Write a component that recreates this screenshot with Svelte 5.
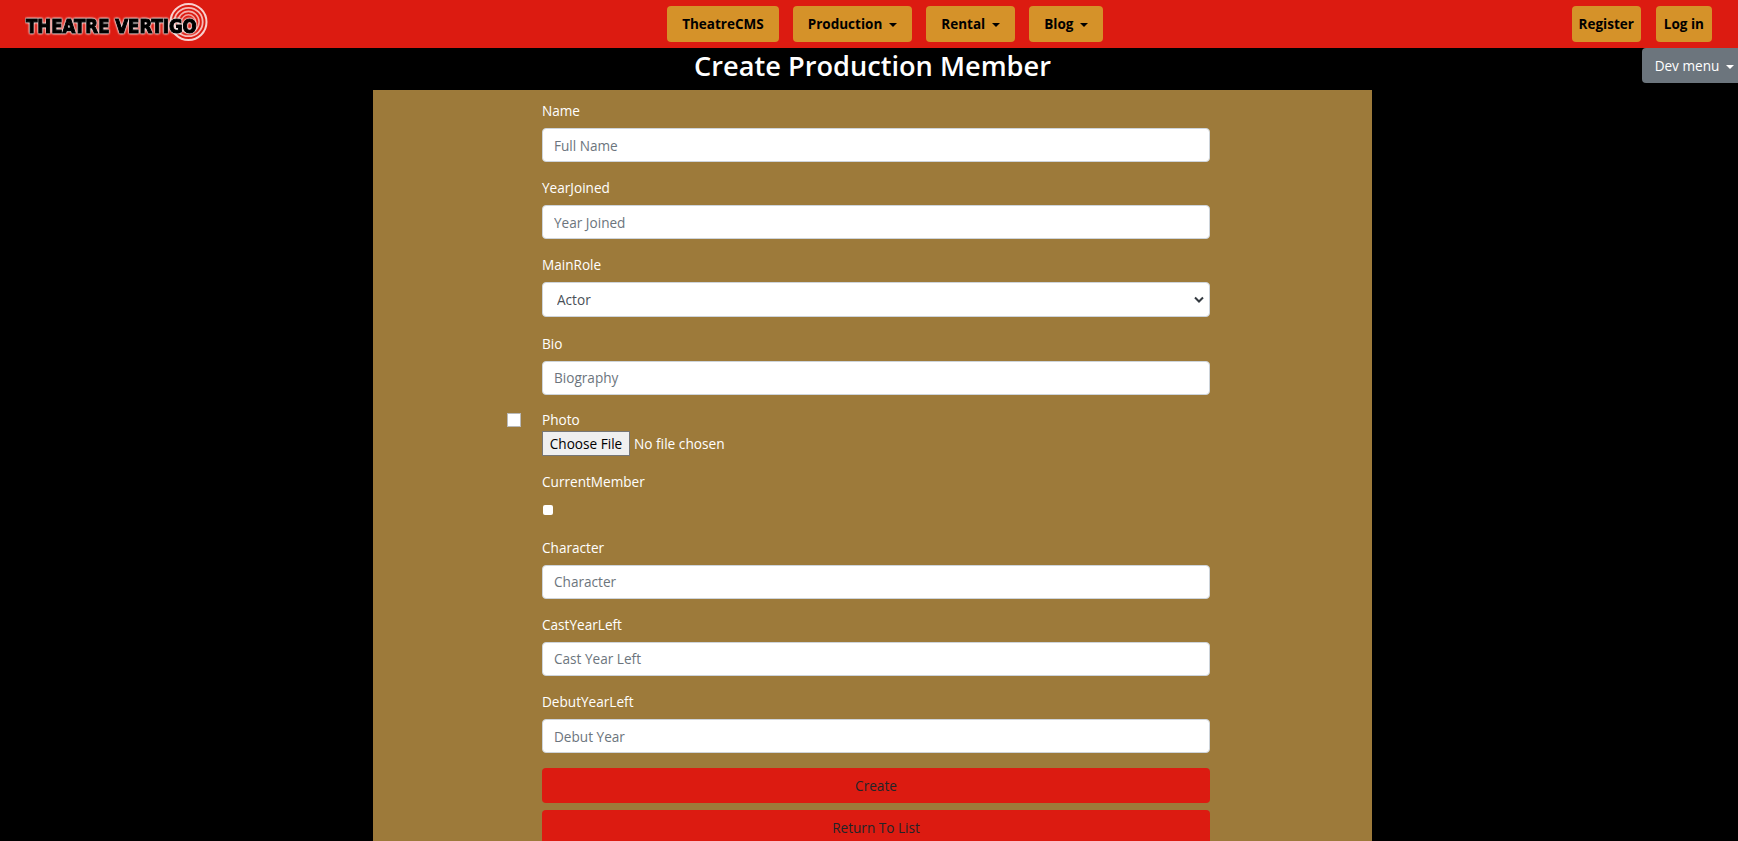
<script>
  const links = [
    { label: "TheatreCMS", caret: false },
    { label: "Production", caret: true },
    { label: "Rental", caret: true },
    { label: "Blog", caret: true },
  ];
  const rings = [
    { r: 18, w: 2, o: 0.8 },
    { r: 14.2, w: 1.8, o: 0.7 },
    { r: 10.6, w: 1.6, o: 0.65 },
    { r: 7.2, w: 1.4, o: 0.6 },
  ];
</script>

<header class="topbar">
  <a class="logo" href="#top" aria-label="Theatre Vertigo">
    <svg width="188" height="44" viewBox="0 0 188 44">
      <g class="rings">
        {#each rings as ring}
          <circle cx="163.5" cy="20" r={ring.r} stroke-width={ring.w} opacity={ring.o} />
        {/each}
      </g>
      <text class="logo-text" transform="translate(1 31) scale(.83 1)">THEATRE VERTIGO</text>
    </svg>
  </a>
  <nav class="links">
    {#each links as link}
      <button class="nav-btn">
        {link.label}
        {#if link.caret}<span class="caret"></span>{/if}
      </button>
    {/each}
  </nav>
  <div class="account">
    <button class="nav-btn account-btn">Register</button>
    <button class="nav-btn account-btn">Log in</button>
  </div>
</header>

<button class="dev-menu">Dev menu <span class="caret"></span></button>

<main>
  <h2>Create Production Member</h2>
  <section class="panel">
    <form>
      <div class="group">
        <label for="name">Name</label>
        <input id="name" type="text" placeholder="Full Name" />
      </div>
      <div class="group">
        <label for="year">YearJoined</label>
        <input id="year" type="text" placeholder="Year Joined" />
      </div>
      <div class="group">
        <label for="role">MainRole</label>
        <div class="select-wrap">
          <select id="role">
            <option>Actor</option>
            <option>Maintenance</option>
          </select>
          <svg class="chevron" width="10" height="8" viewBox="0 0 10 8">
            <path d="M1 1.5 5 5.5 9 1.5" />
          </svg>
        </div>
      </div>
      <div class="group">
        <label for="bio">Bio</label>
        <input id="bio" type="text" placeholder="Biography" />
      </div>
      <div class="group photo">
        <input class="photo-check" type="checkbox" aria-label="Use photo" />
        <label class="tight" for="photo">Photo</label>
        <input id="photo" class="file" type="file" />
      </div>
      <div class="group">
        <label for="current">CurrentMember</label>
        <div class="check-line"><input id="current" class="small-check" type="checkbox" /></div>
      </div>
      <div class="group">
        <label for="character">Character</label>
        <input id="character" type="text" placeholder="Character" />
      </div>
      <div class="group">
        <label for="cast">CastYearLeft</label>
        <input id="cast" type="text" placeholder="Cast Year Left" />
      </div>
      <div class="group">
        <label for="debut">DebutYearLeft</label>
        <input id="debut" type="text" placeholder="Debut Year" />
      </div>
      <button class="action" type="button">Create</button>
      <button class="action" type="button">Return To List</button>
    </form>
  </section>
</main>

<style>
  :global(body) {
    background: #000;
    color: #fff;
    font-family: "Open Sans", "Noto Sans", sans-serif;
    font-size: 13.6px;
    overflow: hidden;
  }
  .topbar {
    display: flex;
    justify-content: space-between;
    align-items: center;
    height: 48px;
    padding: 0 26px 0 25px;
    background: #dc1b11;
  }
  .logo {
    display: block;
    width: 188px;
    height: 44px;
  }
  .rings {
    fill: none;
    stroke: #fff;
    filter: blur(0.4px);
  }
  .logo-text {
    font-family: "DejaVu Sans", sans-serif;
    font-weight: 700;
    font-size: 20px;
    fill: #000;
    stroke: #000;
    stroke-width: 1.2px;
    filter: drop-shadow(0 0 1px #fff) drop-shadow(0 0 0.6px #fff);
  }
  .links,
  .account {
    display: flex;
    gap: 14px;
  }
  .links {
    margin-right: 14px;
  }
  .account {
    gap: 15px;
  }
  .nav-btn {
    height: 36px;
    padding: 0 15px;
    border: 0;
    border-radius: 4px;
    background: #d59229;
    color: #000;
    font-family: inherit;
    font-size: 13.5px;
    font-weight: 700;
  }
  .account-btn {
    padding: 0 8px;
  }
  .account-btn:first-child {
    padding: 0 7px;
  }
  .caret {
    display: inline-block;
    margin-left: 3.5px;
    vertical-align: 2px;
    border-top: 4px solid;
    border-left: 4px solid transparent;
    border-right: 4px solid transparent;
  }
  .dev-menu {
    position: absolute;
    top: 48px;
    right: 0;
    width: 96px;
    height: 35px;
    padding: 0 0 0 9px;
    border: 0;
    border-radius: 4px 0 0 4px;
    background: #6c757d;
    color: #fff;
    font-family: inherit;
    font-size: 13.6px;
    white-space: nowrap;
  }
  main {
    padding: 0 366px 0 373px;
  }
  h2 {
    margin: 0;
    height: 42px;
    font-size: 27.2px;
    font-weight: 600;
    line-height: 35px;
    text-align: center;
  }
  .panel {
    padding: 10px 162px 40px 169px;
    background: #9d7a3a;
  }
  .group {
    position: relative;
    margin-bottom: 15.2px;
  }
  label {
    display: block;
    height: 21px;
    margin-bottom: 7px;
    line-height: 21px;
  }
  label.tight {
    margin-bottom: 0;
    line-height: 20px;
  }
  input[type="text"],
  select {
    display: block;
    box-sizing: border-box;
    width: 100%;
    height: 34px;
    padding: 0 11px;
    border: 1px solid #ced4da;
    border-radius: 4px;
    background: #fff;
    color: #495057;
    font-family: inherit;
    font-size: 13.6px;
  }
  input::placeholder {
    color: #6c757d;
    opacity: 1;
  }
  .select-wrap {
    position: relative;
  }
  select {
    height: 35px;
    appearance: none;
    padding-left: 14px;
  }
  .chevron {
    position: absolute;
    top: 14px;
    right: 6px;
    pointer-events: none;
  }
  .chevron path {
    fill: none;
    stroke: #343a40;
    stroke-width: 2px;
  }
  .file {
    display: block;
    height: 25px;
    color: #fff;
    font-family: inherit;
    font-size: 13.7px;
  }
  .file::file-selector-button {
    height: 25px;
    width: 88px;
    margin-right: 4px;
    padding: 0;
    border: 1px solid #767676;
    border-radius: 0;
    background: #efefef;
    color: #000;
    font-family: inherit;
    font-size: 13.6px;
  }
  .photo-check {
    position: absolute;
    top: 3px;
    left: -35px;
    width: 14px;
    height: 14px;
    margin: 0;
    appearance: none;
    border: 1px solid #b9b9b9;
    background: #fff;
  }
  .check-line {
    display: flex;
    align-items: center;
    height: 22.5px;
    padding-left: 1px;
  }
  .small-check {
    width: 10px;
    height: 10px;
    margin: 0;
    appearance: none;
    border-radius: 2px;
    background: #fff;
  }
  .action {
    display: block;
    width: 100%;
    height: 35px;
    margin-bottom: 7px;
    border: 0;
    border-radius: 4px;
    background: #dc1b11;
    color: #212529;
    font-family: inherit;
    font-size: 13.6px;
  }
</style>
